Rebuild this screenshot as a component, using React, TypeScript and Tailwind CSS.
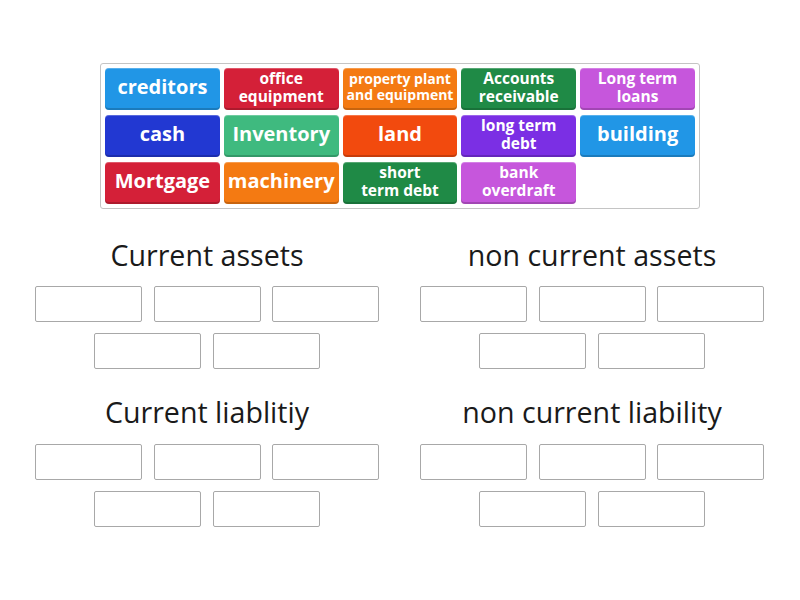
import React from 'react';

type Tile = { label: string[]; color: string; size: 'lg' | 'md' | 'sm' };

const tiles: Tile[] = [
  { label: ['creditors'], color: 'bg-[#2196e6]', size: 'lg' },
  { label: ['office', 'equipment'], color: 'bg-[#d42038]', size: 'md' },
  { label: ['property plant', 'and equipment'], color: 'bg-[#f47a12]', size: 'sm' },
  { label: ['Accounts', 'receivable'], color: 'bg-[#1f8a46]', size: 'md' },
  { label: ['Long term', 'loans'], color: 'bg-[#c656dc]', size: 'md' },
  { label: ['cash'], color: 'bg-[#2238d2]', size: 'lg' },
  { label: ['Inventory'], color: 'bg-[#3fba7f]', size: 'lg' },
  { label: ['land'], color: 'bg-[#f24a0e]', size: 'lg' },
  { label: ['long term', 'debt'], color: 'bg-[#7b2fe4]', size: 'md' },
  { label: ['building'], color: 'bg-[#2196e6]', size: 'lg' },
  { label: ['Mortgage'], color: 'bg-[#d42038]', size: 'lg' },
  { label: ['machinery'], color: 'bg-[#f47a12]', size: 'lg' },
  { label: ['short', 'term debt'], color: 'bg-[#1f8a46]', size: 'md' },
  { label: ['bank', 'overdraft'], color: 'bg-[#c656dc]', size: 'md' },
];

const sizeClass = {
  lg: 'text-[20px] leading-[24px]',
  md: 'text-[15.5px] leading-[18px]',
  sm: 'text-[14px] leading-[16px]',
};

function DropBox() {
  return <div className="w-[107px] h-[36px] border border-[#a8a8a8] rounded-[2px] bg-white" />;
}

function Group({ title, gapClass }: { title: string; gapClass: string }) {
  return (
    <div className="w-[345px] flex flex-col items-center">
      <h2 className={`text-[28.6px] leading-[38px] text-[#1a1a1a] ${gapClass}`}>{title}</h2>
      <div className="flex gap-[11.5px]">
        <DropBox />
        <DropBox />
        <DropBox />
      </div>
      <div className="flex gap-[11.5px] mt-[11px]">
        <DropBox />
        <DropBox />
      </div>
    </div>
  );
}

export default function App() {
  return (
    <div className="w-[800px] h-[600px] bg-white font-['Open_Sans',sans-serif] flex flex-col items-center">
      <div className="mt-[63px] w-[600px] border border-[#c4c4c4] rounded-[3px] p-[4px]">
        <div className="grid grid-cols-5 gap-x-[4px] gap-y-[5px]">
          {tiles.map((t, i) => (
            <div
              key={i}
              className={`${t.color} h-[42px] pb-[4px] rounded-[4px] flex items-center justify-center text-white font-bold text-center shadow-[inset_0_1px_0_rgba(255,255,255,0.25),inset_0_-2px_0_rgba(0,0,0,0.18)]`}
            >
              <span className={`${sizeClass[t.size]} whitespace-nowrap`}>
                {t.label.map((l, j) => (
                  <React.Fragment key={j}>
                    {j > 0 && <br />}
                    {l}
                  </React.Fragment>
                ))}
              </span>
            </div>
          ))}
        </div>
      </div>

      <div className="mt-[27px] flex gap-[40px] pr-[1px]">
        <Group title="Current assets" gapClass="mb-[12px]" />
        <Group title="non current assets" gapClass="mb-[12px]" />
      </div>
      <div className="mt-[24px] flex gap-[40px] pr-[1px]">
        <Group title="Current liablitiy" gapClass="mb-[13px]" />
        <Group title="non current liability" gapClass="mb-[13px]" />
      </div>
    </div>
  );
}
